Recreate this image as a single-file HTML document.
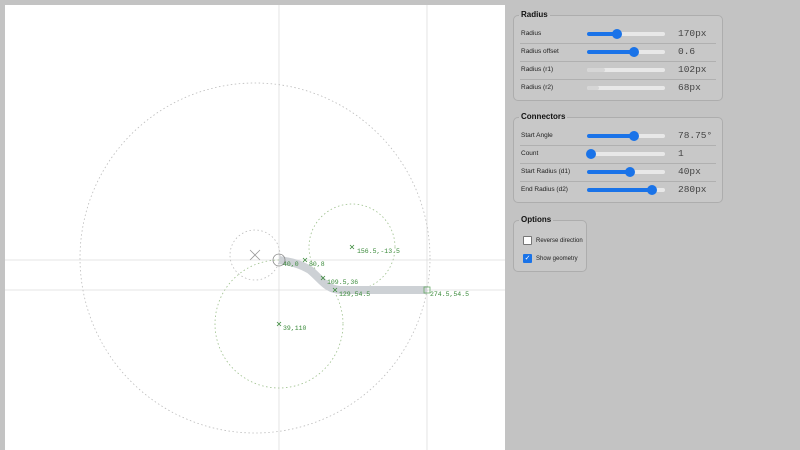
<!DOCTYPE html><html><head><style>
body{margin:0;width:800px;height:450px;background:#c3c3c3;font-family:"Liberation Sans",sans-serif;position:relative;overflow:hidden}
#cv{position:absolute;left:5px;top:5px;width:500px;height:445px;background:#fff}
.box{position:absolute;border:1px solid #adadad;border-radius:5px;background:#c8c8c8;box-sizing:border-box}
.lg{position:absolute;left:5px;top:-6px;font-size:8px;font-weight:bold;padding:0 2px;color:#111;background:linear-gradient(#c3c3c3 50%,#c8c8c8 50%);line-height:10px}
.row{position:absolute;left:6px;right:6px;height:18px;border-bottom:1px solid #b0b0b0;font-size:6.5px;color:#222}
.row.last{border-bottom:none}
.lbl{position:absolute;left:1px;top:5px}
.tr{position:absolute;left:67px;top:7px;width:78px;height:4px;border-radius:2px;background:#e8e8e8}
.fl{position:absolute;left:0;top:0;height:4px;border-radius:2px;background:#1a73e8}
.th{position:absolute;top:-3px;width:10px;height:10px;border-radius:50%;background:#1a73e8;margin-left:-5px}
.dis .fl{background:#d6d6d6}
.val{position:absolute;left:158px;top:3px;font-family:"Liberation Mono",monospace;font-size:9.5px;color:#444}
.cb{position:absolute;left:9px;width:7px;height:7px;border:1px solid #777;background:#fff;border-radius:1px}
.ck{position:absolute;left:22px;font-size:6px;color:#222;white-space:nowrap}
</style></head><body>
<div id="cv"></div>
<svg style="position:absolute;left:0;top:0" width="505" height="450">
<g stroke="#ddd" stroke-width="0.8"><line x1="279" y1="5" x2="279" y2="450"/><line x1="427" y1="5" x2="427" y2="450"/><line x1="5" y1="260" x2="505" y2="260"/><line x1="5" y1="290" x2="505" y2="290"/></g>
<g fill="none" stroke="#bbb" stroke-dasharray="1.5,2.5" stroke-width="0.8">
<circle cx="255" cy="258" r="175"/><circle cx="255" cy="255" r="25"/></g>
<g fill="none" stroke="#9bbf8a" stroke-dasharray="1.5,2.5" stroke-width="0.8"><circle cx="279" cy="324" r="64"/><circle cx="352" cy="247" r="43"/></g>
<path d="M279 260 C292 262 300 264 310 270 C322 280 326 289 340 290 L427 290" fill="none" stroke="#cdd1d5" stroke-width="8"/>
<circle cx="279" cy="260" r="6" fill="none" stroke="#888" stroke-width="0.8"/>
<rect x="424" y="287" width="6" height="6" fill="none" stroke="#6a6" stroke-width="0.8"/>
<path d="M250 250l10 10M260 250l-10 10" stroke="#999" stroke-width="0.8"/>
<g stroke="#3a8a3a" stroke-width="0.8"><path d="M350 245l4 4M354 245l-4 4"/><path d="M277 322l4 4M281 322l-4 4"/><path d="M303 258l4 4M307 258l-4 4"/><path d="M321 276l4 4M325 276l-4 4"/><path d="M333 288l4 4M337 288l-4 4"/></g>
<g fill="#3a8a3a" font-family="Liberation Mono,monospace" font-size="6.5"><text x="357" y="253">156.5,-13.5</text><text x="283" y="330">39,110</text><text x="283" y="266">40,0</text><text x="309" y="266">80,8</text><text x="327" y="284">109.5,36</text><text x="339" y="296">129,54.5</text><text x="430" y="296">274.5,54.5</text></g>
</svg>
<div class="box" style="left:513px;top:15px;width:210px;height:86px"><span class="lg">Radius</span>
<div class="row" style="top:9px"><span class="lbl">Radius</span><div class="tr"><div class="fl" style="width:30px"></div><div class="th" style="left:30px"></div></div><span class="val">170px</span></div>
<div class="row" style="top:27px"><span class="lbl">Radius offset</span><div class="tr"><div class="fl" style="width:47px"></div><div class="th" style="left:47px"></div></div><span class="val">0.6</span></div>
<div class="row dis" style="top:45px"><span class="lbl">Radius (r1)</span><div class="tr"><div class="fl" style="width:18px"></div></div><span class="val">102px</span></div>
<div class="row dis last" style="top:63px"><span class="lbl">Radius (r2)</span><div class="tr"><div class="fl" style="width:12px"></div></div><span class="val">68px</span></div>
</div>
<div class="box" style="left:513px;top:117px;width:210px;height:86px"><span class="lg">Connectors</span>
<div class="row" style="top:9px"><span class="lbl">Start Angle</span><div class="tr"><div class="fl" style="width:47px"></div><div class="th" style="left:47px"></div></div><span class="val">78.75°</span></div>
<div class="row" style="top:27px"><span class="lbl">Count</span><div class="tr"><div class="fl" style="width:4px"></div><div class="th" style="left:4px"></div></div><span class="val">1</span></div>
<div class="row" style="top:45px"><span class="lbl">Start Radius (d1)</span><div class="tr"><div class="fl" style="width:43px"></div><div class="th" style="left:43px"></div></div><span class="val">40px</span></div>
<div class="row last" style="top:63px"><span class="lbl">End Radius (d2)</span><div class="tr"><div class="fl" style="width:65px"></div><div class="th" style="left:65px"></div></div><span class="val">280px</span></div>
</div>
<div class="box" style="left:513px;top:220px;width:74px;height:52px"><span class="lg">Options</span>
<div class="cb" style="top:15px"></div><span class="ck" style="top:17px">Reverse direction</span>
<div class="cb" style="top:33px;background:#1a73e8;border-color:#1a73e8;color:#fff;font-size:7px;line-height:7px;text-align:center">✓</div><span class="ck" style="top:35px">Show geometry</span>
</div>
</body></html>
